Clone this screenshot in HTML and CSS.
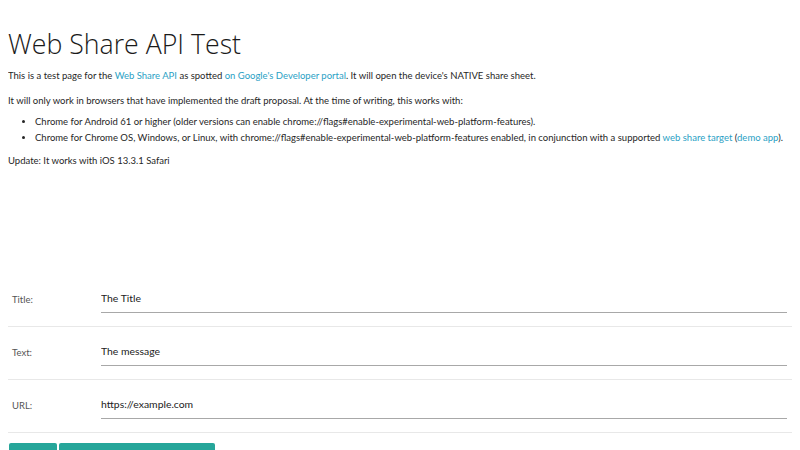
FILE: index.html
```html
<!DOCTYPE html>
<html>
<head>
<meta charset="utf-8">
<title>Web Share API Test</title>
<link rel="stylesheet" href="styles.css">
</head>
<body>
<h1 class="title">Web Share API Test</h1>
<p class="para">This is a test page for the <a class="link" href="#">Web Share API</a> as spotted <a class="link" href="#">on Google's Developer portal</a>. It will open the device's NATIVE share sheet.</p>
<p class="para para-tight">It will only work in browsers that have implemented the draft proposal. At the time of writing, this works with:</p>
<ul class="list">
<li>Chrome for Android 61 or higher (older versions can enable chrome://flags#enable-experimental-web-platform-features).</li>
<li>Chrome for Chrome OS, Windows, or Linux, with chrome://flags#enable-experimental-web-platform-features enabled, in conjunction with a supported <a class="link" href="#">web share target</a> (<a class="link" href="#">demo app</a>).</li>
</ul>
<p class="para">Update: It works with iOS 13.3.1 Safari</p>
<table class="form">
<tr class="row"><td class="label">Title:</td><td class="field"><input class="input" value="The Title"></td></tr>
<tr class="row"><td class="label">Text:</td><td class="field"><input class="input" value="The message"></td></tr>
<tr class="row"><td class="label">URL:</td><td class="field"><input class="input" value="https://example.com"></td></tr>
</table>
<div class="buttons"><button class="btn btn-small">Share</button><button class="btn btn-wide">Share with navigator.share</button></div>
</body>
</html>
```
FILE: styles.css
```css
html, body { background: #fff; }
body {
  margin: 8px;
  font-family: "Lato", "Open Sans", sans-serif;
  font-size: 9.5px;
  line-height: 16px;
  color: #262626;
}
.title {
  font-family: "Open Sans", sans-serif;
  font-weight: 300;
  font-size: 26.7px;
  line-height: 32px;
  margin: 20px 0 8px;
  color: #1a1a1a;
}
.para { margin: 0 0 9px; }
.para-tight { margin-bottom: 5px; }
.link { color: #2a9fc5; text-decoration: none; }
.list { margin: 0 0 7px; padding-left: 27px; }
.form {
  width: 100%;
  border-collapse: collapse;
  margin-top: 105px;
}
.row { border-bottom: 1px solid #e8e8e8; }
.label {
  width: 89px;
  padding: 0 0 0 4px;
  color: #555;
  vertical-align: middle;
}
.field { padding: 10px 5px 13px 0; vertical-align: middle; }
.input {
  display: block;
  width: 100%;
  box-sizing: border-box;
  height: 29px;
  border: none;
  border-bottom: 1px solid #a8a8a8;
  font-family: "Lato", sans-serif;
  font-size: 10.4px;
  line-height: 16px;
  padding: 6px 0;
  color: #222;
  outline: none;
  background: transparent;
}
.buttons { display: flex; gap: 2px; margin-top: 10px; padding-left: 1px; }
.btn {
  background: #26a69a;
  color: #fff;
  border: none;
  border-radius: 2px;
  height: 36px;
  padding: 12px 0 0;
  font-family: "Lato", sans-serif;
  font-size: 10px;
  line-height: 24px;
  text-transform: uppercase;
}
.btn-small { width: 48px; }
.btn-wide { width: 156px; }
```
